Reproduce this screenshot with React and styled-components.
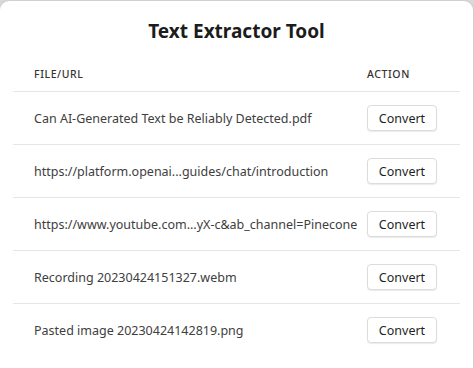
import styled, { createGlobalStyle } from "styled-components";

const GlobalStyle = createGlobalStyle`
  html, body {
    margin: 0;
    padding: 0;
    background: #d9d9d9;
  }
  body {
    font-family: "Segoe UI", "Noto Sans", sans-serif;
    color: #222;
  }
`

const Card = styled.div`
  background: #fff;
  margin: 1px 1px 0 0;
  height: 367px;
  box-sizing: border-box;
  border-radius: 9px 9px 0 0;
  padding: 14px 13px 0 13px;
  box-shadow: 0 0 2px rgba(0, 0, 0, 0.15);
`

const Title = styled.h1`
  margin: 0 0 16px;
  text-align: center;
  font-size: 19px;
  font-weight: 700;
  color: #1c1c1c;
  line-height: 32px;
`

const Table = styled.table`
  width: 100%;
  border-collapse: collapse;
  table-layout: fixed;
`

const HeadCell = styled.th`
  text-align: left;
  font-size: 10.5px;
  font-weight: 500;
  letter-spacing: 0.6px;
  line-height: 15px;
  color: #333;
  padding: 4px ${(p) => (p.$action ? "0" : "21px")} 0;
  height: 24px;
  vertical-align: top;
  border-bottom: 1px solid #e6e6e6;
  width: ${(p) => (p.$action ? "93px" : "auto")};
`

const Row = styled.tr`
  border-bottom: 1px solid ${(p) => (p.$last ? "transparent" : "#e6e6e6")};
`

const NameCell = styled.td`
  height: 52px;
  padding: 0 0 0 21px;
  font-size: 12.5px;
  color: #404040;
  white-space: nowrap;
`

const ActionCell = styled.td`
  padding: 0;
`

const ConvertButton = styled.button`
  width: 70px;
  height: 26px;
  background: #fff;
  border: 1px solid #dcdcdc;
  border-radius: 4px;
  box-shadow: 0 1px 1px rgba(0, 0, 0, 0.08);
  font-family: inherit;
  font-size: 12.5px;
  color: #1f1f1f;
  cursor: pointer;
  padding: 0;
`

const files = [
  "Can AI-Generated Text be Reliably Detected.pdf",
  "https://platform.openai...guides/chat/introduction",
  "https://www.youtube.com...yX-c&ab_channel=Pinecone",
  "Recording 20230424151327.webm",
  "Pasted image 20230424142819.png",
]

export default function App() {
  return (
    <>
      <GlobalStyle />
      <Card>
        <Title>Text Extractor Tool</Title>
        <Table>
          <thead>
            <tr>
              <HeadCell>FILE/URL</HeadCell>
              <HeadCell $action>ACTION</HeadCell>
            </tr>
          </thead>
          <tbody>
            {files.map((name, i) => (
              <Row key={name} $last={i === files.length - 1}>
                <NameCell>{name}</NameCell>
                <ActionCell>
                  <ConvertButton>Convert</ConvertButton>
                </ActionCell>
              </Row>
            ))}
          </tbody>
        </Table>
      </Card>
    </>
  )
}
